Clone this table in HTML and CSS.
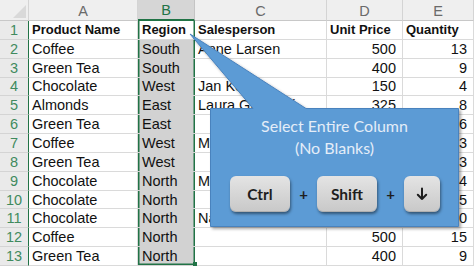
FILE: index.html
```html
<!DOCTYPE html>
<html lang="en">
<head>
<meta charset="utf-8">
<title>Select Entire Column</title>
<link rel="stylesheet" href="styles.css">
</head>
<body>
<div class="page">
  <div class="sheet">
    <div class="corner"></div>
    <div class="colhead">A</div>
    <div class="colhead active">B</div>
    <div class="colhead">C</div>
    <div class="colhead">D</div>
    <div class="colhead last">E</div>

    <div class="rowhead">1</div>
    <div class="cell head">Product Name</div>
    <div class="cell head sel top cur">Region</div>
    <div class="cell head">Salesperson</div>
    <div class="cell head">Unit Price</div>
    <div class="cell head last">Quantity</div>

    <div class="rowhead">2</div>
    <div class="cell">Coffee</div>
    <div class="cell sel">South</div>
    <div class="cell">Anne Larsen</div>
    <div class="cell num">500</div>
    <div class="cell num last">13</div>

    <div class="rowhead">3</div>
    <div class="cell">Green Tea</div>
    <div class="cell sel">South</div>
    <div class="cell"></div>
    <div class="cell num">400</div>
    <div class="cell num last">9</div>

    <div class="rowhead">4</div>
    <div class="cell">Chocolate</div>
    <div class="cell sel">West</div>
    <div class="cell">Jan Kotas</div>
    <div class="cell num">150</div>
    <div class="cell num last">4</div>

    <div class="rowhead">5</div>
    <div class="cell">Almonds</div>
    <div class="cell sel">East</div>
    <div class="cell">Laura Giussani</div>
    <div class="cell num">325</div>
    <div class="cell num last">8</div>

    <div class="rowhead">6</div>
    <div class="cell">Green Tea</div>
    <div class="cell sel">East</div>
    <div class="cell"></div>
    <div class="cell num">400</div>
    <div class="cell num last">6</div>

    <div class="rowhead">7</div>
    <div class="cell">Coffee</div>
    <div class="cell sel">West</div>
    <div class="cell">Mariya Sergienko</div>
    <div class="cell num">500</div>
    <div class="cell num last">3</div>

    <div class="rowhead">8</div>
    <div class="cell">Green Tea</div>
    <div class="cell sel">West</div>
    <div class="cell"></div>
    <div class="cell num">400</div>
    <div class="cell num last">3</div>

    <div class="rowhead">9</div>
    <div class="cell">Chocolate</div>
    <div class="cell sel">North</div>
    <div class="cell">Michael Neipper</div>
    <div class="cell num">150</div>
    <div class="cell num last">4</div>

    <div class="rowhead">10</div>
    <div class="cell">Chocolate</div>
    <div class="cell sel">North</div>
    <div class="cell"></div>
    <div class="cell num">150</div>
    <div class="cell num last">5</div>

    <div class="rowhead">11</div>
    <div class="cell">Chocolate</div>
    <div class="cell sel">North</div>
    <div class="cell">Nancy Freehafer</div>
    <div class="cell num">150</div>
    <div class="cell num last">10</div>

    <div class="rowhead">12</div>
    <div class="cell">Coffee</div>
    <div class="cell sel">North</div>
    <div class="cell"></div>
    <div class="cell num">500</div>
    <div class="cell num last">15</div>

    <div class="rowhead">13</div>
    <div class="cell">Green Tea</div>
    <div class="cell sel bottom">North</div>
    <div class="cell"></div>
    <div class="cell num">400</div>
    <div class="cell num last">9</div>
  </div>

  <!-- shortcut callout pointing at the column header cell -->
  <div class="callout">
    <svg class="bubble" width="474" height="266" viewBox="0 0 474 266">
      <defs>
        <filter id="shade" x="-10%" y="-10%" width="130%" height="130%">
          <feDropShadow dx="2" dy="2" stdDeviation="1.6" flood-color="#000" flood-opacity="0.35"/>
        </filter>
      </defs>
      <path d="M210.5 108.5 L253 108.5 L190 34 L306 108.5 L458.5 108.5 L458.5 226.5 L210.5 226.5 Z"
            fill="#5b9bd5" stroke="#4a82bd" stroke-width="1" filter="url(#shade)"/>
    </svg>
    <div class="card">
      <div class="title">Select Entire Column<br>(No Blanks)</div>
      <div class="keys">
        <div class="key wide">Ctrl</div>
        <div class="plus">+</div>
        <div class="key wide">Shift</div>
        <div class="plus">+</div>
        <div class="key square">
          <svg width="12" height="14" viewBox="0 0 12 14">
            <path d="M6 1.5 V12 M1.8 7.8 L6 12 L10.2 7.8" fill="none" stroke="#1e1e1e" stroke-width="2" stroke-linecap="round" stroke-linejoin="round"/>
          </svg>
        </div>
      </div>
    </div>
  </div>
</div>
</body>
</html>
```

FILE: styles.css
```css
* { box-sizing: border-box; }

html, body {
  margin: 0;
  padding: 0;
  background: #ffffff;
}

.page {
  position: relative;
  width: 474px;
  height: 266px;
  overflow: hidden;
  font-family: "Liberation Sans", Arial, sans-serif;
}

/* worksheet grid */
.sheet {
  display: grid;
  grid-template-columns: 29px 109px 57px 132px 76px 71px;
  grid-template-rows: 21px repeat(13, 1fr);
  width: 474px;
  height: 266px;
}

.corner {
  position: relative;
  background: #efefef;
  border-right: 1px solid #d4d4d4;
  border-bottom: 1px solid #c8c8c8;
}
.corner::after {
  content: "";
  position: absolute;
  right: 2px;
  bottom: 2px;
  width: 0;
  height: 0;
  border-left: 13px solid transparent;
  border-bottom: 13px solid #d9d9d9;
}

.colhead {
  display: flex;
  align-items: center;
  justify-content: center;
  background: #efefef;
  color: #6a6a6a;
  font-size: 14.5px;
  border-right: 1px solid #d4d4d4;
  border-bottom: 1px solid #c8c8c8;
  padding-top: 1px;
}
.colhead.active {
  background: #d6d6d6;
  color: #217346;
  border-bottom: 2px solid #217346;
  border-right-color: #c4c4c4;
}
.colhead.last { border-right: 1px solid #d4d4d4; }

.rowhead {
  display: flex;
  align-items: center;
  justify-content: center;
  background: #eaeaea;
  color: #3f8a5e;
  font-size: 14.5px;
  border-bottom: 1px solid #d4d4d4;
  border-right: 1.5px solid #217346;
}

.cell {
  display: flex;
  align-items: center;
  padding: 0 3px;
  font-size: 14.5px;
  color: #111;
  white-space: nowrap;
  overflow: visible;
  border-right: 1px solid #dadada;
  border-bottom: 1px solid #dadada;
  background: #ffffff;
}
.cell.head {
  font-weight: bold;
  font-size: 13px;
}
.cell.num {
  justify-content: flex-end;
  padding-right: 6px;
}

/* selected column B */
.cell.sel {
  position: relative;
  background: #d2d2d2;
  border-right: none;
  border-bottom-color: #d2d2d2;
  box-shadow: inset 1.5px 0 0 #217346, inset -1.5px 0 0 #217346;
  padding-left: 4px;
}
.cell.sel.cur {
  background: #ffffff;
  border-bottom-color: #dadada;
}
.cell.sel.bottom {
  box-shadow: inset 1.5px 0 0 #217346, inset -1.5px 0 0 #217346, inset 0 -1.5px 0 #217346;
}
.cell.sel.bottom::after {
  content: "";
  position: absolute;
  right: -2px;
  bottom: -1px;
  width: 4px;
  height: 4px;
  background: #217346;
}

/* callout overlay */
.callout {
  position: absolute;
  left: 0;
  top: 0;
  width: 474px;
  height: 266px;
  pointer-events: none;
}
.bubble {
  position: absolute;
  left: 0;
  top: 0;
}
.card {
  position: absolute;
  left: 210px;
  top: 108px;
  width: 249px;
  height: 119px;
  display: flex;
  flex-direction: column;
  align-items: center;
  padding-top: 7px;
  font-family: Lato, "Open Sans", sans-serif;
}
.title {
  color: #e4edf8;
  font-size: 16px;
  line-height: 22px;
  text-align: center;
}
.keys {
  display: flex;
  align-items: center;
  margin-top: 17px;
  margin-left: 1px;
}
.key {
  height: 36px;
  display: flex;
  align-items: center;
  justify-content: center;
  border-radius: 6px;
  background: linear-gradient(#e4e4e4, #c8c8c8);
  box-shadow: 1px 2px 3px rgba(0, 0, 0, 0.45), inset 0 -1px 0 rgba(0, 0, 0, 0.12);
  color: #1e1e1e;
  font-weight: bold;
  font-size: 15.5px;
}
.key.wide { width: 60px; }
.key.square { width: 36px; }
.plus {
  width: 27px;
  text-align: center;
  color: #1e1e1e;
  font-weight: bold;
  font-size: 15px;
}
```
